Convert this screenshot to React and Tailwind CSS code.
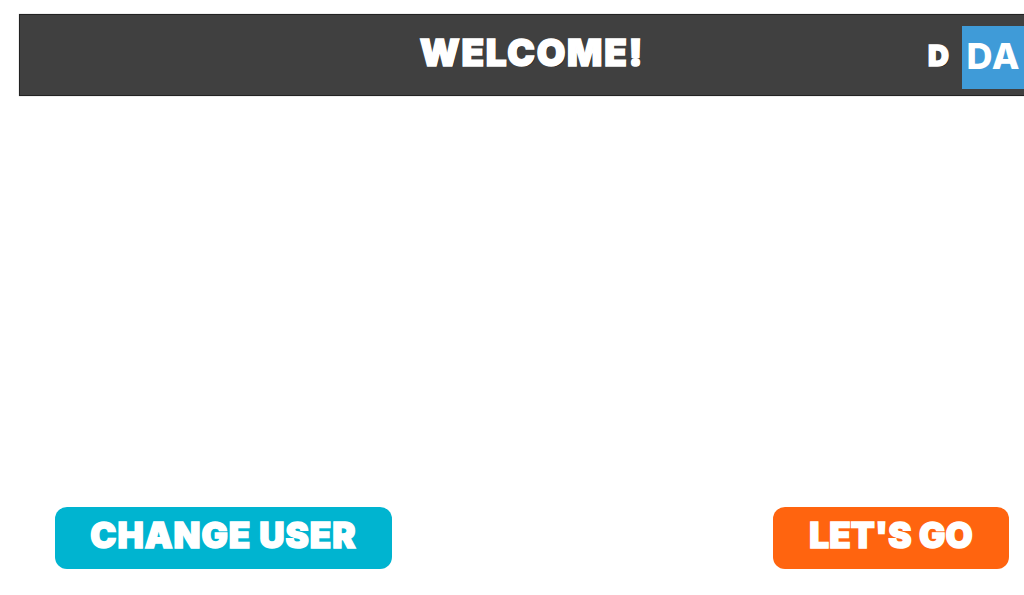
import React from 'react';

const titleFont = "font-['Inter','Lato',sans-serif] font-black";

const ActionButton = ({ label, className }) => (
  <button
    className={`h-[62px] pb-[5px] rounded-xl text-white text-[35px] leading-none ${titleFont} [-webkit-text-stroke:1.5px_white] ${className}`}
  >
    {label}
  </button>
);

const App = () => {
  return (
    <div className="w-[1024px] h-[595px] overflow-hidden bg-white flex flex-col justify-between pt-[14px] pb-[26px]">
      <header className="ml-[19px] w-[1026px] h-[82px] shrink-0 bg-[#404040] border border-[#222222] shadow-[0_0_1px_#999999] grid grid-cols-[1fr_auto_1fr] items-center">
        <div />
        <h1 className={`pb-[6px] text-white text-[37px] leading-none tracking-[1.7px] ${titleFont} [-webkit-text-stroke:1.5px_white] [text-shadow:1px_1px_0_#111111]`}>
          WELCOME!
        </h1>
        <div className="mt-[4px] flex items-center justify-end gap-[13px] pr-[19px]">
          <span className={`mb-[4px] text-white text-[29px] leading-none ${titleFont} [-webkit-text-stroke:1.5px_white] [text-shadow:1px_1px_0_#111111]`}>
            D
          </span>
          <div className="w-[63px] h-[63px] pb-[2px] bg-[#3f9bd8] flex items-center justify-center text-white text-[36px] tracking-[1px] font-['Inter',sans-serif] font-extrabold">
            DA
          </div>
        </div>
      </header>

      <div className="flex justify-between pl-[55px] pr-[15px]">
        <ActionButton label="CHANGE USER" className="w-[337px] bg-[#00b4d0] tracking-[1px]" />
        <ActionButton label="LET'S GO" className="w-[236px] bg-[#ff640f] tracking-[0.2px]" />
      </div>
    </div>
  );
};

export default App;
